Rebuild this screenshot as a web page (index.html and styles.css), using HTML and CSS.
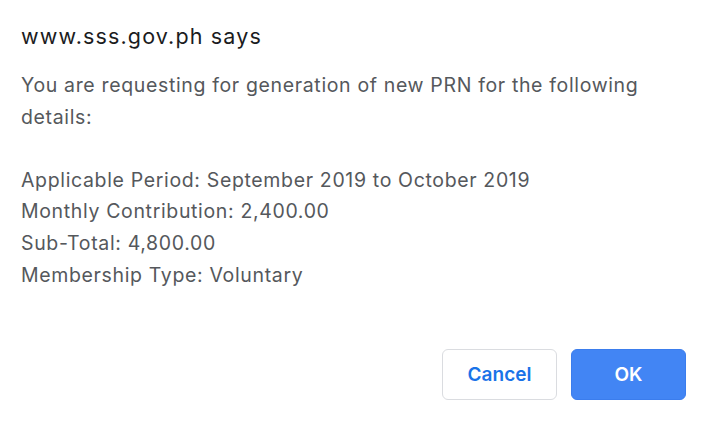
FILE: index.html
```html
<!DOCTYPE html>
<html lang="en">
<head>
    <meta charset="UTF-8"/>
    <title>www.sss.gov.ph says</title>
    <link rel="stylesheet" href="styles.css">
</head>
<body>
<div class="dialog">
    <h1 class="dialog-title">www.sss.gov.ph says</h1>
    <div class="dialog-message">
        <p>You are requesting for generation of new PRN for the following details:</p>
        <p>Applicable Period: September 2019 to October 2019<br/>
            Monthly Contribution: 2,400.00<br/>
            Sub-Total: 4,800.00<br/>
            Membership Type: Voluntary</p>
    </div>
    <div class="dialog-buttons">
        <button class="btn btn-cancel">Cancel</button>
        <button class="btn btn-ok">OK</button>
    </div>
</div>
</body>
</html>
```

FILE: styles.css
```css
body {
    margin: 0;
    background-color: #fff;
    font-family: Inter, "Liberation Sans", sans-serif;
}

.dialog {
    width: 707px;
    height: 422px;
    padding: 21px 21px 0 21px;
    box-sizing: border-box;
}

.dialog-title {
    margin: 0;
    font-size: 21.5px;
    font-weight: normal;
    letter-spacing: 1.15px;
    color: #1b1c1e;
    line-height: 30px;
}

.dialog-message {
    margin-top: 19px;
    width: 640px;
    font-size: 19.5px;
    letter-spacing: 0.65px;
    line-height: 31.6px;
    color: #55585c;
}

.dialog-message p {
    margin: 0 0 31.6px 0;
}

.dialog-buttons {
    display: flex;
    justify-content: flex-end;
    gap: 14px;
    margin-top: 58px;
}

.btn {
    width: 115px;
    height: 51px;
    border-radius: 6px;
    font-family: Inter, "Liberation Sans", sans-serif;
    font-size: 19px;
    font-weight: 600;
    cursor: pointer;
}

.btn-cancel {
    background: #fff;
    color: #1a73e8;
    border: 1px solid #dadce0;
}

.btn-ok {
    background: #4285f4;
    color: #fff;
    border: 1px solid #3b7ded;
}
```
